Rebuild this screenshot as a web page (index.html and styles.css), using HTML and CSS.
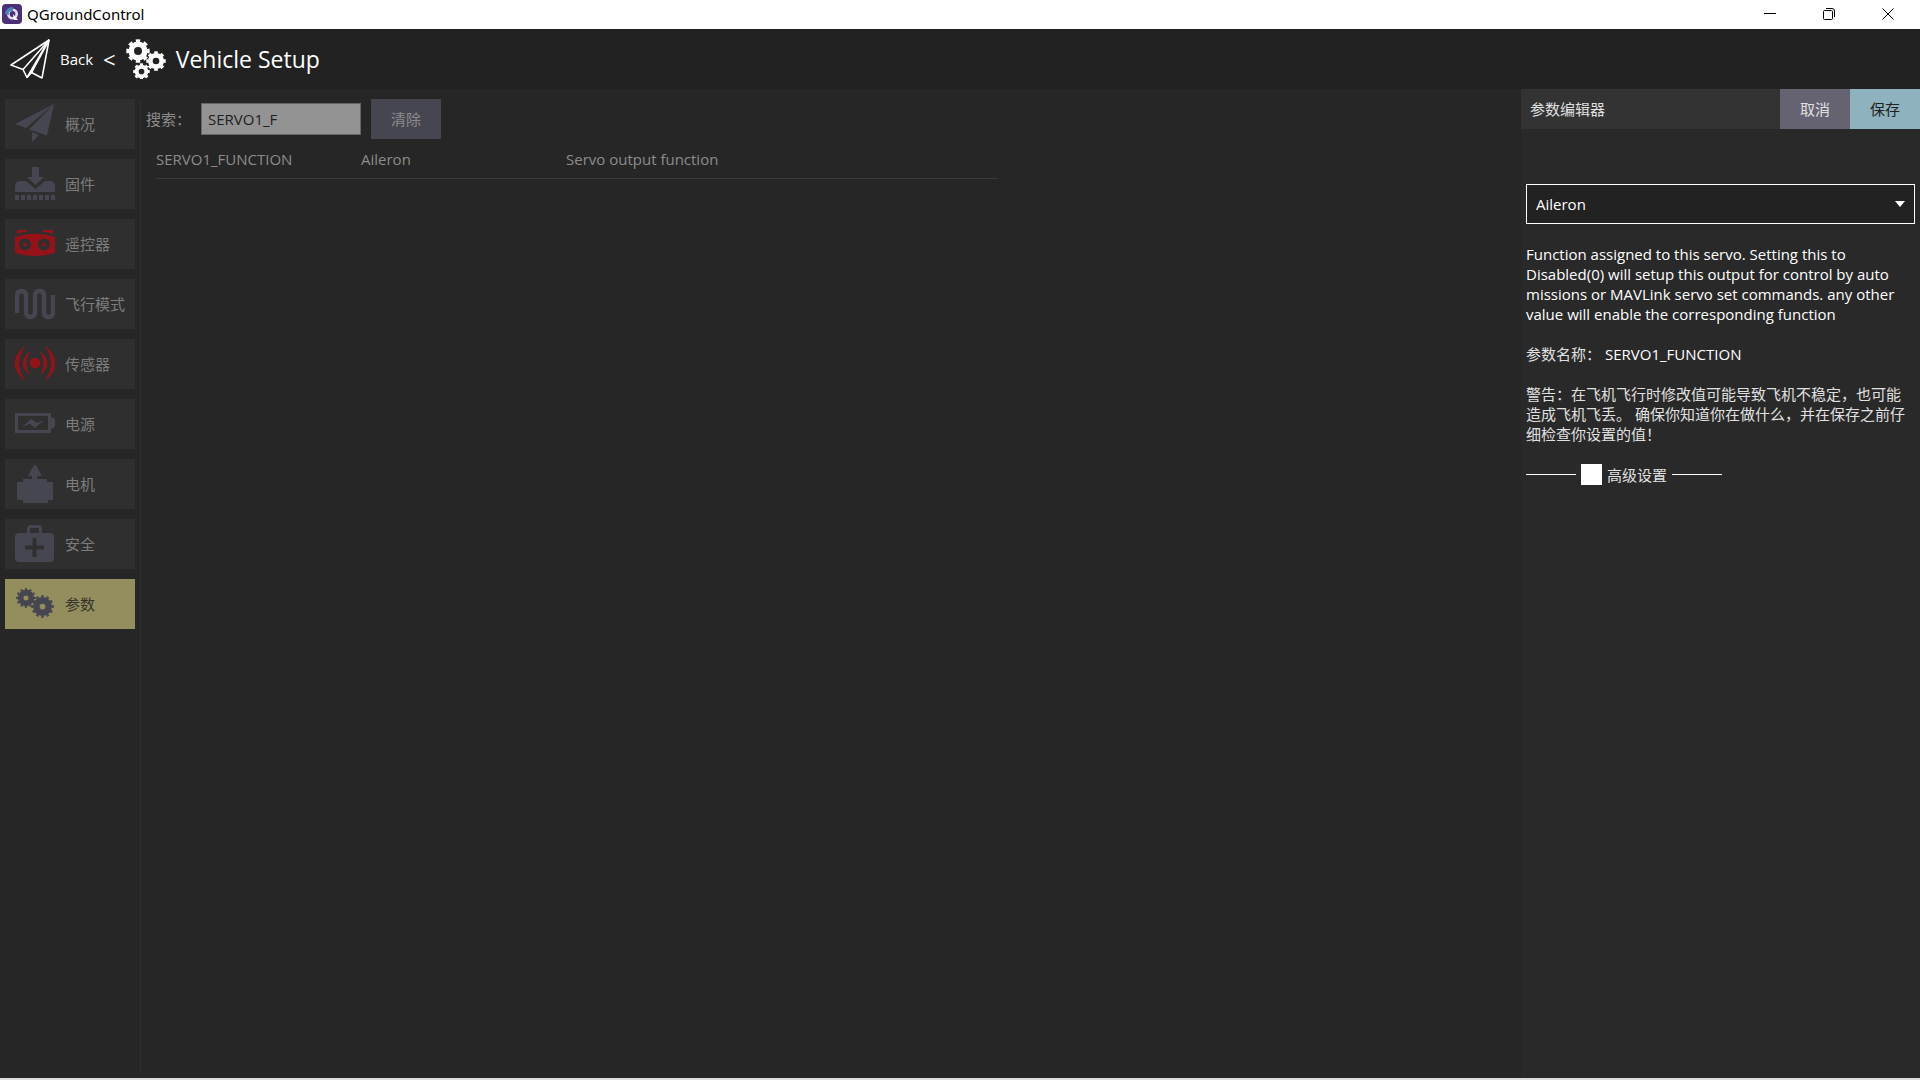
FILE: index.html
```html
<!DOCTYPE html>
<html lang="zh-CN">
<head>
    <meta charset="UTF-8">
    <meta name="viewport" content="width=device-width, initial-scale=1.0">
    <title>QGroundControl</title>
    <link rel="stylesheet" href="styles.css">
</head>
<body>
    <!-- Shared shapes -->
    <svg class="defs" aria-hidden="true">
        <symbol id="gear" viewBox="-12 -12 24 24">
            <circle r="6.8" fill="none" stroke="currentColor" stroke-width="5.6"/>
            <circle r="10.2" fill="none" stroke="currentColor" stroke-width="3" pathLength="160" stroke-dasharray="11 9" stroke-dashoffset="5.5"/>
        </symbol>
        <symbol id="gear-fine" viewBox="-12 -12 24 24">
            <circle r="6.4" fill="none" stroke="currentColor" stroke-width="6.8"/>
            <circle r="10.6" fill="none" stroke="currentColor" stroke-width="2.4" pathLength="240" stroke-dasharray="10 10" stroke-dashoffset="5"/>
        </symbol>
    </svg>

    <header class="titlebar">
        <svg class="app-icon" viewBox="0 0 20 20">
            <rect width="20" height="20" rx="4" fill="#4c2f78"/>
            <circle cx="10.5" cy="10" r="4.2" fill="none" stroke="#e6e1ee" stroke-width="2.6"/>
            <path d="M3 10a7 7 0 0 1 8-7v4a3 3 0 0 0-4 4z" fill="#4684b8"/>
            <path d="M11 10l5 6h-4z" fill="#fff"/>
        </svg>
        <span class="app-name">QGroundControl</span>
        <div class="window-controls">
            <button aria-label="Minimize"><svg viewBox="0 0 12 12"><path d="M0 5.5h12"/></svg></button>
            <button aria-label="Restore"><svg viewBox="0 0 12 12"><rect x=".5" y="2.5" width="9" height="9" rx="1"/><path d="M3 .5h6a2.5 2.5 0 0 1 2.5 2.5v6"/></svg></button>
            <button aria-label="Close"><svg viewBox="0 0 12 12"><path d="M.5.5l11 11M11.5.5l-11 11"/></svg></button>
        </div>
    </header>

    <nav class="toolbar">
        <a href="#" class="back">
            <svg class="icon" viewBox="0 0 40 40" fill="none" stroke="currentColor" stroke-width="1.6" stroke-linejoin="round">
                <path d="M39 1L1 26l12 4.5 4 8 4.5-5L32 39z"/>
                <path d="M39 1L13 30.500M39 1L17 38.500M39 1L21.500 33.500"/>
            </svg>
            <span>Back</span>
        </a>
        <span class="chevron">&lt;</span>
        <svg class="icon" viewBox="0 0 40 40">
            <use href="#gear" x="0" y="0" width="24" height="24"/>
            <use href="#gear" x="20" y="12" width="20" height="20"/>
            <use href="#gear" x="7" y="24" width="17" height="17"/>
        </svg>
        <h1>Vehicle Setup</h1>
    </nav>

    <div class="content">
        <aside class="sidebar">
            <button>
                <svg class="icon" viewBox="0 0 40 40" fill="currentColor"><path d="M39 0L0 20l11 4zM39 0L14 25.500l18 6zM17 28l7 3-7 7z"/></svg>
                概况
            </button>
            <button>
                <svg class="icon" viewBox="0 0 40 40" fill="currentColor">
                    <path d="M0 28v-5q0-6 5-6h6l9.500 8 9.500-8h5q5 0 5 6v5z"/>
                    <path d="M17 3h7v10h5l-8.500 8L12 13h5zM0 31h4v5H0zM6 31h4v5H6zM12 31h4v5h-4zM18 31h4v5h-4zM24 31h4v5h-4zM30 31h4v5h-4zM36 31h4v5h-4z"/>
                </svg>
                固件
            </button>
            <button class="alert">
                <svg class="icon" viewBox="0 0 40 40">
                    <path d="M2 6h10v2Q6 8 2 10zM28 6h10v4q-4-2-10-2zM0 13Q20 6 40 13v16Q20 35 0 29z" fill="currentColor"/>
                    <g class="holes"><circle cx="10" cy="20.500" r="6"/><circle cx="29" cy="20.500" r="6"/></g>
                    <circle cx="10" cy="20.500" r="1.800" fill="currentColor"/><circle cx="29" cy="20.500" r="1.800" fill="currentColor"/>
                </svg>
                遥控器
            </button>
            <button>
                <svg class="icon" viewBox="0 0 40 40" fill="none" stroke="currentColor" stroke-width="4.500"><path d="M2 29V12q0-5 4.500-5T11 12v16q0 5 4.500 5t4.500-5V12q0-5 4.500-5t4.500 5v16q0 5 4.500 5t4.500-5V11"/></svg>
                飞行模式
            </button>
            <button class="alert">
                <svg class="icon" viewBox="0 0 40 40" fill="currentColor">
                    <circle cx="20" cy="19" r="5.200"/>
                    <path d="M9 3Q-9 19 9 36Q-2 19 9 3zM14 8Q2 19 14 30Q8 19 14 8zM31 3q18 16 0 33q11-17 0-33zM26 8q12 11 0 22q6-11 0-22z" stroke="currentColor" stroke-width=".8"/>
                </svg>
                传感器
            </button>
            <button>
                <svg class="icon" viewBox="0 0 40 40"><path d="M1.500 10.500h33v17h-33z" fill="none" stroke="currentColor" stroke-width="3"/><path d="M36 13l4 2v8l-4 2zM7 23l9-8 6 4 7-3-9 8-5-4z" fill="currentColor"/></svg>
                电源
            </button>
            <button>
                <svg class="icon" viewBox="0 0 40 40" fill="currentColor"><path d="M19 1h2l6 11h-5v3h10v3h6v18h-5v3H8v-3H2V18h6v-3h9v-3h-4z"/></svg>
                电机
            </button>
            <button>
                <svg class="icon" viewBox="0 0 40 40"><path d="M13.500 10V5q0-2.500 2.500-2.500h7q2.500 0 2.500 2.500v5" fill="none" stroke="currentColor" stroke-width="3"/><rect y="9" width="39" height="29" rx="4" fill="currentColor"/><path class="cross" d="M17.500 14h4v7.500H29v4h-7.500V33h-4v-7.500H10v-4h7.500z"/></svg>
                安全
            </button>
            <button class="active">
                <svg class="icon" viewBox="0 0 40 40"><use href="#gear-fine" x="1" y="4" width="20" height="20"/><use href="#gear-fine" x="16" y="11" width="23" height="23"/></svg>
                参数
            </button>
        </aside>

        <main class="parameters">
            <form class="search">
                <label for="search">搜索：</label>
                <input id="search" type="text" value="SERVO1_F">
                <button type="button">清除</button>
            </form>
            <table>
                <tr>
                    <td>SERVO1_FUNCTION</td>
                    <td>Aileron</td>
                    <td>Servo output function</td>
                </tr>
            </table>
        </main>

        <section class="editor">
            <div class="editor-header">
                <h2>参数编辑器</h2>
                <button class="cancel">取消</button>
                <button class="save">保存</button>
            </div>
            <div class="editor-body">
                <div class="select">
                    <select aria-label="SERVO1_FUNCTION">
                        <option>Aileron</option>
                    </select>
                    <svg viewBox="0 0 10 6"><path d="M0 0h10L5 6z" fill="#fff"/></svg>
                </div>
                <p>Function assigned to this servo. Setting this to Disabled(0) will setup this output for control by auto missions or MAVLink servo set commands. any other value will enable the corresponding function</p>
                <p class="param-name"><span class="label">参数名称：</span><span>SERVO1_FUNCTION</span></p>
                <p class="warning">警告：在飞机飞行时修改值可能导致飞机不稳定，也可能造成飞机飞丢。 确保你知道你在做什么，并在保存之前仔细检查你设置的值！</p>
                <div class="advanced">
                    <label><input type="checkbox">高级设置</label>
                </div>
            </div>
        </section>
    </div>
</body>
</html>
```

FILE: styles.css
```css
* {
    box-sizing: border-box;
}

body {
    margin: 0;
    min-height: 100vh;
    display: flex;
    flex-direction: column;
    background-color: #262626;
    border-bottom: 2px solid #ddd;
    color: #fff;
    font-family: 'Open Sans', 'Noto Sans CJK SC', sans-serif;
    font-size: 15px;
    line-height: 20px;
}

button, input, select {
    margin: 0;
    padding: 0;
    border: none;
    border-radius: 0;
    font: inherit;
    color: inherit;
}

h1, h2, p {
    margin: 0;
    font-size: 15px;
    font-weight: 400;
}

.defs {
    position: absolute;
    width: 0;
    height: 0;
}

.icon {
    flex: none;
    width: 40px;
    height: 40px;
}

/* Window title bar */
.titlebar {
    display: flex;
    align-items: center;
    gap: 5px;
    height: 29px;
    padding: 0 3px 1px 2px;
    background-color: #fff;
    color: #000;
}

.app-icon {
    width: 20px;
    height: 20px;
}

.app-name {
    font-family: 'Noto Sans', sans-serif;
}

.window-controls {
    display: flex;
    margin-left: auto;
    height: 100%;
}

.window-controls button {
    display: flex;
    align-items: center;
    justify-content: center;
    width: 59px;
    background: none;
}

.window-controls svg {
    width: 12px;
    height: 12px;
    fill: none;
    stroke: #000;
}

/* Toolbar */
.toolbar {
    display: flex;
    align-items: center;
    gap: 10px;
    height: 60px;
    padding: 0 10px;
    background-color: #222;
}

.back {
    display: flex;
    align-items: center;
    gap: 10px;
    color: #fff;
    text-decoration: none;
}

.chevron {
    font-size: 22px;
}

.toolbar h1 {
    font-size: 23px;
    line-height: 30px;
}

/* Content */
.content {
    flex: 1;
    display: flex;
}

.sidebar {
    display: flex;
    flex-direction: column;
    gap: 10px;
    width: 141px;
    margin: 10px 0 8px;
    padding: 0 5px;
    border-right: 1px solid #303030;
}

.sidebar button {
    display: flex;
    align-items: center;
    gap: 10px;
    height: 50px;
    padding: 0 10px;
    background-color: #2f2f2f;
    color: #7c7c7c;
    white-space: nowrap;
}

.sidebar .icon {
    color: #464650;
}

.sidebar .alert .icon {
    color: #951318;
}

.sidebar .active {
    background-color: #948e5e;
    color: #35352a;
}

.holes, .cross {
    fill: #2f2f2f;
}

.parameters {
    flex: 1;
    padding: 10px 5px;
    color: #8c8c8c;
}

.search {
    display: flex;
    align-items: center;
    gap: 10px;
}

.search label {
    width: 45px;
}

.search input {
    width: 160px;
    height: 32px;
    padding: 0 6px;
    background-color: #939393;
    border: 1px solid #666;
    color: #202020;
}

.search button {
    width: 70px;
    height: 40px;
    background-color: #464650;
}

table {
    width: 842px;
    margin: 10px 0 0 10px;
    border-collapse: collapse;
    table-layout: fixed;
}

td {
    padding: 0 0 9px;
    border-bottom: 1px solid #3a3a3a;
}

td:nth-child(-n+2) {
    width: 205px;
}

/* Parameter editor */
.editor {
    width: 399px;
    background-color: #292929;
}

.editor-header {
    display: flex;
    align-items: center;
    background-color: #333;
    color: #e0e0e0;
}

.editor-header h2 {
    flex: 1;
    padding-left: 9px;
}

.editor-header button {
    width: 70px;
    height: 40px;
}

.cancel {
    background-color: #656371;
}

.editor-header .save {
    background-color: #8eb3be;
    color: #202020;
}

.editor-body {
    display: flex;
    flex-direction: column;
    gap: 20px;
    padding: 55px 5px 0;
}

.select {
    position: relative;
}

.select select {
    display: block;
    width: 100%;
    height: 40px;
    padding: 0 9px;
    appearance: none;
    background-color: #222;
    border: 1px solid #fff;
}

.select svg {
    position: absolute;
    top: 17px;
    right: 10px;
    width: 10px;
    height: 6px;
    pointer-events: none;
}

.param-name {
    display: flex;
    gap: 4px;
}

.label, .warning, .advanced {
    color: #e0e0e0;
}

.advanced {
    display: flex;
    align-items: center;
    gap: 5px;
}

.advanced::before, .advanced::after {
    content: '';
    width: 50px;
    height: 1px;
    background-color: #fff;
}

.advanced label {
    display: flex;
    align-items: center;
    gap: 5px;
}

.advanced input {
    width: 21px;
    height: 21px;
    appearance: none;
    background-color: #fff;
}
```
